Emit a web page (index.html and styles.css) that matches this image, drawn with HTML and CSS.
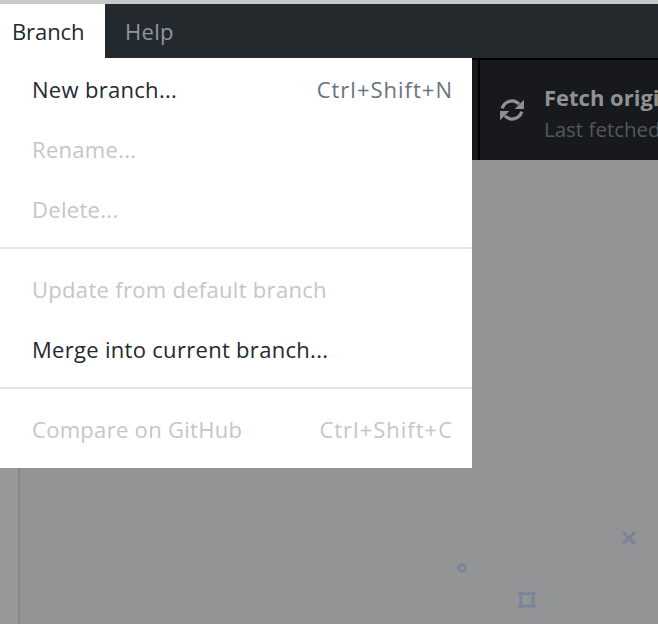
FILE: index.html
```html
<!DOCTYPE html>
<html>
<head>
    <meta charset="utf-8">
    <title>Branch menu</title>
    <link rel="stylesheet" href="styles.css">
</head>
<body>
    <div class="topline"></div>
    <div class="titlebar">
        <div class="titlebar-item active">Branch</div>
        <div class="titlebar-item">Help</div>
    </div>
    <div class="toolbar">
        <div class="toolbar-left"></div>
        <div class="fetch">
            <svg class="fetch-icon" viewBox="0 0 24 24" width="26" height="26">
                <path d="M3 10.5 A9.2 9.2 0 0 1 18.5 6.5" fill="none" stroke="#8f9194" stroke-width="3"/>
                <path d="M23 2.5 V11 H14.5 Z" fill="#8f9194"/>
                <path d="M21 13.5 A9.2 9.2 0 0 1 5.5 17.5" fill="none" stroke="#8f9194" stroke-width="3"/>
                <path d="M1 21.5 V13 H9.5 Z" fill="#8f9194"/>
            </svg>
            <div class="fetch-text">
                <div class="fetch-title">Fetch origin</div>
                <div class="fetch-sub">Last fetched just now</div>
            </div>
        </div>
    </div>
    <div class="content">
        <div class="sidebar"></div>
        <div class="main">
            <svg class="shape shape-x" viewBox="0 0 16 16" width="16" height="16">
                <path d="M2 2 L14 14 M14 2 L2 14" stroke="#77849a" stroke-width="3" fill="none"/>
            </svg>
            <svg class="shape shape-o" viewBox="0 0 10 10" width="10" height="10">
                <circle cx="5" cy="5" r="3.4" stroke="#77849a" stroke-width="2.6" fill="none"/>
            </svg>
            <svg class="shape shape-sq" viewBox="0 0 18 18" width="18" height="18">
                <path d="M3 1.8 Q9 4.4 15 1.8 Q16.6 1.8 16.2 3 Q13.6 9 16.2 15 Q16.6 16.2 15 16.2 Q9 13.6 3 16.2 Q1.4 16.2 1.8 15 Q4.4 9 1.8 3 Q1.4 1.8 3 1.8 Z" stroke="#77849a" stroke-width="2.6" stroke-linejoin="round" fill="none"/>
            </svg>
        </div>
    </div>

    <div class="menu">
        <div class="menu-item"><span>New branch...</span><span class="shortcut">Ctrl+Shift+N</span></div>
        <div class="menu-item disabled"><span>Rename...</span></div>
        <div class="menu-item disabled"><span>Delete...</span></div>
        <div class="menu-sep"></div>
        <div class="menu-item disabled"><span>Update from default branch</span></div>
        <div class="menu-item"><span>Merge into current branch...</span></div>
        <div class="menu-sep"></div>
        <div class="menu-item disabled"><span>Compare on GitHub</span><span class="shortcut">Ctrl+Shift+C</span></div>
    </div>
</body>
</html>
```

FILE: styles.css
```css
html, body {
    height: 100%;
}

body {
    margin: 0;
    display: flex;
    flex-direction: column;
    overflow: hidden;
    font-family: "Open Sans", "Noto Sans", sans-serif;
    background: #939496;
}

.topline {
    height: 4px;
    background: #c8c8c8;
}

.titlebar {
    display: flex;
    height: 54px;
    background: #24292e;
    font-size: 22px;
}

.titlebar-item {
    display: flex;
    align-items: center;
    padding: 0 20px;
    color: #8e96a0;
    letter-spacing: 0.3px;
}

.titlebar-item.active {
    width: 105px;
    box-sizing: border-box;
    padding: 0 0 0 12px;
    background: #fff;
    color: #24292e;
    letter-spacing: -0.1px;
}

.toolbar {
    display: flex;
    height: 102px;
    background: #17191c;
    border-top: 2px solid #000;
    box-sizing: border-box;
}

.toolbar-left {
    width: 478px;
    flex: none;
}

.fetch {
    display: flex;
    align-items: center;
    flex: 1;
    min-width: 0;
    gap: 19px;
    padding-left: 19px;
    border-left: 2px solid #000;
    overflow: hidden;
}

.fetch-icon {
    flex: none;
}

.fetch-text {
    flex: none;
    padding-top: 7px;
}

.fetch-title {
    font-size: 22px;
    font-weight: 700;
    line-height: 30px;
    color: #8f9296;
}

.fetch-sub {
    font-size: 20.5px;
    line-height: 34px;
    color: #53585e;
}

.content {
    flex: 1;
    display: flex;
}

.sidebar {
    width: 18px;
    background: #989898;
    border-right: 2px solid #87888b;
}

.main {
    flex: 1;
    position: relative;
}

.shape {
    position: absolute;
}

.shape-x {
    left: 601px;
    top: 370px;
}

.shape-o {
    left: 437px;
    top: 403px;
}

.shape-sq {
    left: 498px;
    top: 431px;
}

.menu {
    position: absolute;
    left: 0;
    top: 58px;
    width: 472px;
    height: 410px;
    box-sizing: border-box;
    padding-top: 2px;
    background: #fff;
    font-size: 22px;
    color: #24292e;
}

.menu-item {
    display: flex;
    justify-content: space-between;
    align-items: center;
    height: 60px;
    box-sizing: border-box;
    padding: 0 20px 2px 32px;
    letter-spacing: 0.3px;
}

.menu-item.disabled {
    color: #c4c6c8;
}

.shortcut {
    color: #6a737d;
    letter-spacing: 1px;
    margin-right: -1px;
}

.disabled .shortcut {
    color: #c4c6c8;
}

.menu-sep {
    height: 2px;
    margin: 7px 0 11px;
    background: #e1e4e8;
}
```
